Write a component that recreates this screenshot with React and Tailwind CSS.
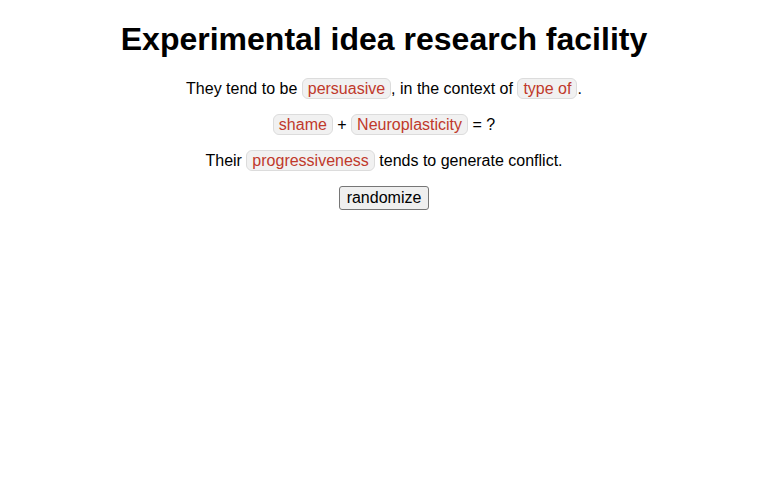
import { useState } from 'react';

function Chip({ children }) {
  return (
    <span className="inline-block rounded-md border border-[#dcdcdc] bg-[#f1f1f1] px-[5px] leading-[19px] text-[#c0392b]">
      {children}
    </span>
  );
}

export default function App() {
  const [ideas] = useState({
    adjective: 'persuasive',
    context: 'type of',
    left: 'shame',
    right: 'Neuroplasticity',
    trait: 'progressiveness',
  });

  return (
    <div className="min-h-screen bg-white text-center text-black font-['Liberation_Sans',Arial,sans-serif]">
      <h1 className="pt-[21px] text-[32px] font-bold leading-[37px]">Experimental idea research facility</h1>
      <div className="mt-[20px] flex flex-col items-center gap-[15px] text-base leading-[21px]">
        <p>
          They tend to be <Chip>{ideas.adjective}</Chip>, in the context of <Chip>{ideas.context}</Chip>.
        </p>
        <p>
          <Chip>{ideas.left}</Chip> + <Chip>{ideas.right}</Chip> = ?
        </p>
        <p>
          Their <Chip>{ideas.trait}</Chip> tends to generate conflict.
        </p>
        <button className="rounded-[3px] border border-[#767676] bg-[#efefef] px-[7px] leading-[22px] text-base">
          randomize
        </button>
      </div>
    </div>
  );
}
